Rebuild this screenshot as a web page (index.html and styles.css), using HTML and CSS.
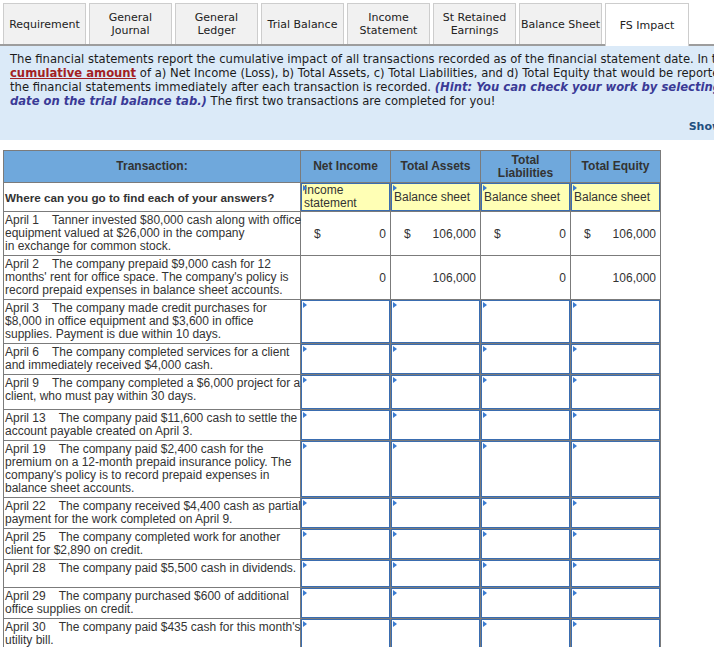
FILE: index.html
```html
<!DOCTYPE html>
<html lang="en">
<head>
<meta charset="utf-8">
<title>FS Impact</title>
<link rel="stylesheet" href="styles.css">
</head>
<body>
<div class="tabs">
  <div class="tab">Requirement</div>
  <div class="tab">General<br>Journal</div>
  <div class="tab">General<br>Ledger</div>
  <div class="tab">Trial Balance</div>
  <div class="tab">Income<br>Statement</div>
  <div class="tab">St Retained<br>Earnings</div>
  <div class="tab">Balance Sheet</div>
  <div class="tab active">FS Impact</div>
</div>

<div class="panel">
  <p class="intro">The financial statements report the cumulative impact of all transactions recorded as of the financial statement date. In the table below, enter the<br><span class="key">cumulative amount</span> of a) Net Income (Loss), b) Total Assets, c) Total Liabilities, and d) Total Equity that would be reported on<br>the financial statements immediately after each transaction is recorded. <span class="hint">(Hint: You can check your work by selecting the</span><br><span class="hint">date on the trial balance tab.)</span> The first two transactions are completed for you!</p>
  <div class="show">Show All</div>
</div>

<table class="fs">
  <colgroup>
    <col class="c-txn"><col class="c-amt"><col class="c-amt"><col class="c-amt"><col class="c-amt">
  </colgroup>
  <thead>
    <tr class="head">
      <th>Transaction:</th>
      <th>Net Income</th>
      <th>Total Assets</th>
      <th>Total<br>Liabilities</th>
      <th>Total Equity</th>
    </tr>
  </thead>
  <tbody>
    <tr class="where">
      <td class="txn"><strong>Where can you go to find each of your answers?</strong></td>
      <td class="pick">Income<br>statement</td>
      <td class="pick">Balance sheet</td>
      <td class="pick">Balance sheet</td>
      <td class="pick">Balance sheet</td>
    </tr>
    <tr>
      <td class="txn"><span class="date">April 1</span>Tanner invested $80,000 cash along with office<br>equipment valued at $26,000 in the company<br>in exchange for common stock.</td>
      <td class="done"><div class="amt"><span>$</span><span>0</span></div></td>
      <td class="done"><div class="amt"><span>$</span><span>106,000</span></div></td>
      <td class="done"><div class="amt"><span>$</span><span>0</span></div></td>
      <td class="done"><div class="amt"><span>$</span><span>106,000</span></div></td>
    </tr>
    <tr>
      <td class="txn"><span class="date">April 2</span>The company prepaid $9,000 cash for 12<br>months' rent for office space. The company's policy is<br>record prepaid expenses in balance sheet accounts.</td>
      <td class="done"><div class="amt"><span></span><span>0</span></div></td>
      <td class="done"><div class="amt"><span></span><span>106,000</span></div></td>
      <td class="done"><div class="amt"><span></span><span>0</span></div></td>
      <td class="done"><div class="amt"><span></span><span>106,000</span></div></td>
    </tr>
    <tr>
      <td class="txn"><span class="date">April 3</span>The company made credit purchases for<br>$8,000 in office equipment and $3,600 in office<br>supplies. Payment is due within 10 days.</td>
      <td class="in"></td><td class="in"></td><td class="in"></td><td class="in"></td>
    </tr>
    <tr>
      <td class="txn"><span class="date">April 6</span>The company completed services for a client<br>and immediately received $4,000 cash.</td>
      <td class="in"></td><td class="in"></td><td class="in"></td><td class="in"></td>
    </tr>
    <tr>
      <td class="txn tall"><span class="date">April 9</span>The company completed a $6,000 project for a<br>client, who must pay within 30 days.</td>
      <td class="in"></td><td class="in"></td><td class="in"></td><td class="in"></td>
    </tr>
    <tr>
      <td class="txn"><span class="date">April 13</span>The company paid $11,600 cash to settle the<br>account payable created on April 3.</td>
      <td class="in"></td><td class="in"></td><td class="in"></td><td class="in"></td>
    </tr>
    <tr>
      <td class="txn"><span class="date">April 19</span>The company paid $2,400 cash for the<br>premium on a 12-month prepaid insurance policy. The<br>company's policy is to record prepaid expenses in<br>balance sheet accounts.</td>
      <td class="in"></td><td class="in"></td><td class="in"></td><td class="in"></td>
    </tr>
    <tr>
      <td class="txn"><span class="date">April 22</span>The company received $4,400 cash as partial<br>payment for the work completed on April 9.</td>
      <td class="in"></td><td class="in"></td><td class="in"></td><td class="in"></td>
    </tr>
    <tr>
      <td class="txn"><span class="date">April 25</span>The company completed work for another<br>client for $2,890 on credit.</td>
      <td class="in"></td><td class="in"></td><td class="in"></td><td class="in"></td>
    </tr>
    <tr>
      <td class="txn"><span class="date">April 28</span>The company paid $5,500 cash in dividends.</td>
      <td class="in"></td><td class="in"></td><td class="in"></td><td class="in"></td>
    </tr>
    <tr>
      <td class="txn"><span class="date">April 29</span>The company purchased $600 of additional<br>office supplies on credit.</td>
      <td class="in"></td><td class="in"></td><td class="in"></td><td class="in"></td>
    </tr>
    <tr>
      <td class="txn"><span class="date">April 30</span>The company paid $435 cash for this month's<br>utility bill.</td>
      <td class="in"></td><td class="in"></td><td class="in"></td><td class="in"></td>
    </tr>
  </tbody>
</table>
</body>
</html>
```

FILE: styles.css
```css
html, body {
  margin: 0;
  padding: 0;
  overflow: hidden;
  background: #ffffff;
}

body {
  font-family: "DejaVu Sans", Verdana, sans-serif;
  color: #1b1b1b;
}

/* ---- tab strip ---- */
.tabs {
  display: flex;
  align-items: flex-end;
  gap: 3px;
  padding: 3px 0 0 3px;
  border-bottom: 2px solid #9d9d9d;
}

.tab {
  box-sizing: border-box;
  width: 83px;
  height: 41px;
  display: flex;
  align-items: center;
  justify-content: center;
  text-align: center;
  font-size: 11px;
  line-height: 13px;
  color: #222;
  background: #f1f1f1;
  border: 1px solid #cdcdcd;
  border-bottom: none;
}

.tab.active {
  width: 84px;
  height: 43px;
  margin-bottom: -2px;
  background: #ffffff;
}

/* ---- instructions panel ---- */
.panel {
  width: 752px;
  background: #dbeaf8;
  padding: 6px 0 6px 10px;
  box-sizing: border-box;
}

.intro {
  margin: 0;
  font-size: 11.6px;
  line-height: 14px;
  white-space: nowrap;
  color: #1b1b1b;
}

.key {
  font-weight: bold;
  color: #a31f24;
  text-decoration: underline;
}

.hint {
  font-weight: bold;
  font-style: italic;
  color: #3a3a96;
}

.show {
  margin-top: 12px;
  padding-right: 10px;
  text-align: right;
  font-size: 11px;
  line-height: 14px;
  font-weight: bold;
  color: #1f4f7f;
}

/* ---- impact table ---- */
.fs {
  margin: 10px 0 0 3px;
  border-collapse: collapse;
  table-layout: fixed;
  width: 657px;
  font-family: "Liberation Sans", Arial, sans-serif;
  font-size: 12px;
  color: #333;
}

.c-txn { width: 297px; }
.c-amt { width: 90px; }

.fs th,
.fs td {
  border: 1px solid #7b7b7b;
}

.head th {
  height: 31px;
  padding: 0 2px;
  background: #6fa8dc;
  font-weight: bold;
  line-height: 13px;
  color: #333;
}

.txn {
  padding: 2px 2px 2px 1px;
  line-height: 13px;
  white-space: nowrap;
  vertical-align: top;
}

.txn.tall {
  padding-bottom: 6px;
}

.where .txn {
  vertical-align: middle;
  font-size: 11.7px;
  height: 24px;
}

.date {
  margin-right: 13px;
}

/* answer boxes with the small blue flag */
.pick,
.in {
  position: relative;
  padding: 0;
  box-shadow: inset 0 0 0 1px #3a6db0;
}

.pick::before,
.in::before {
  content: "";
  position: absolute;
  top: 2px;
  left: 2px;
  border-left: 4px solid #3b7bd0;
  border-top: 3px solid transparent;
  border-bottom: 3px solid transparent;
}

.in {
  height: 27px;
}

.pick {
  background: #ffffb5;
  padding: 0 3px;
  line-height: 13px;
  vertical-align: middle;
  color: #333;
}

.done {
  vertical-align: middle;
  padding: 0;
}

.amt {
  display: flex;
  justify-content: space-between;
  padding: 0 4px 0 13px;
}
```
